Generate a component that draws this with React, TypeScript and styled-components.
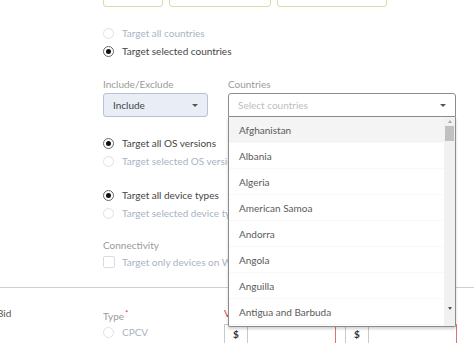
import React from "react";
import styled, { createGlobalStyle } from "styled-components";

const Global = createGlobalStyle`
  html, body { margin: 0; padding: 0; background: #fff; }
  body { font-family: Lato, "Open Sans", Arial, sans-serif; font-size: 10px; color: #454545; overflow: hidden; }
  * { box-sizing: border-box; }
`;

const Page = styled.div`
  width: 474px;
  height: 343px;
  overflow: hidden;
  position: relative;
`;

const Content = styled.div`
  padding-left: 103px;
  display: flex;
  flex-direction: column;
`;

const BoxRow = styled.div`
  display: flex;
  gap: 6px;
  margin-top: -26px;
  height: 33px;
`;

const GreenBox = styled.div<{ w: number }>`
  width: ${(p) => p.w}px;
  height: 33px;
  border: 1px solid #cfe0a8;
  border-radius: 3px;
`;

const RadioGroup = styled.div<{ mt: number }>`
  display: flex;
  flex-direction: column;
  margin-top: ${(p) => p.mt}px;
`;

const RadioRow = styled.div<{ muted?: boolean }>`
  display: flex;
  align-items: center;
  height: 18px;
  gap: 8px;
  color: ${(p) => (p.muted ? "#a9b3c4" : "#454545")};
  white-space: nowrap;
`;

const Radio = styled.span<{ on?: boolean }>`
  width: 11px;
  height: 11px;
  border-radius: 50%;
  border: 1px solid ${(p) => (p.on ? "#666" : "#dde1e6")};
  display: inline-flex;
  align-items: center;
  justify-content: center;
  flex: none;
  &::after {
    content: "";
    width: 5px;
    height: 5px;
    border-radius: 50%;
    background: ${(p) => (p.on ? "#111" : "transparent")};
  }
`;

const SelectRow = styled.div`
  display: flex;
  gap: 20px;
  margin-top: 16px;
`;

const Field = styled.div<{ w: number }>`
  width: ${(p) => p.w}px;
  display: flex;
  flex-direction: column;
  gap: 1px;
  position: relative;
`;

const Label = styled.div`
  color: #9a9a9a;
  height: 16px;
  line-height: 16px;
`;

const SelectBox = styled.div<{ filled?: boolean; focus?: boolean }>`
  height: 24px;
  border: 1px solid ${(p) => (p.focus ? "#8c8c8c" : "#b9c2d2")};
  border-radius: 3px;
  background: ${(p) => (p.filled ? "#e8edf6" : "#fff")};
  display: flex;
  align-items: center;
  justify-content: space-between;
  padding: 0 9px 0 9px;
  color: ${(p) => (p.filled ? "#454545" : "#bdbdbd")};
  ${(p) => (p.focus ? "border-bottom-left-radius:0;border-bottom-right-radius:0;" : "")}
`;

const Caret = styled.span`
  width: 0;
  height: 0;
  border-left: 3px solid transparent;
  border-right: 3px solid transparent;
  border-top: 3px solid #555;
`;

const Dropdown = styled.div`
  position: absolute;
  left: 0;
  top: 41px;
  width: 228px;
  height: 210px;
  border: 1px solid #8c8c8c;
  border-top: none;
  background: #fff;
  box-shadow: 0 2px 3px rgba(0, 0, 0, 0.18);
  display: flex;
  z-index: 5;
  border-bottom-left-radius: 2px;
  border-bottom-right-radius: 2px;
`;

const List = styled.div`
  flex: 1;
  display: flex;
  flex-direction: column;
`;

const Item = styled.div<{ active?: boolean }>`
  height: 26px;
  line-height: 26px;
  padding-left: 10px;
  color: #5a5a5a;
  background: ${(p) => (p.active ? "#f4f4f4" : "#fff")};
  box-shadow: inset 0 -1px 0 #f8f8f8;
`;

const ScrollTrack = styled.div`
  width: 11px;
  background: #f1f1f1;
  display: flex;
  flex-direction: column;
  align-items: center;
  padding-top: 3px;
  position: relative;
`;

const Arrow = styled.span<{ down?: boolean }>`
  width: 0;
  height: 0;
  border-left: 2.5px solid transparent;
  border-right: 2.5px solid transparent;
  ${(p) => (p.down ? "border-top: 3px solid #555;" : "border-bottom: 3px solid #aaa;")}
`;

const Thumb = styled.div`
  width: 9px;
  height: 15px;
  background: #c1c1c1;
  margin-top: 3px;
`;

const DownArrowWrap = styled.div`
  margin-top: auto;
  margin-bottom: 4px;
`;

const CheckRow = styled.div`
  display: flex;
  align-items: center;
  gap: 7px;
  height: 18px;
  color: #a9b3c4;
  white-space: nowrap;
`;

const Checkbox = styled.span`
  width: 12px;
  height: 12px;
  border: 1px solid #d9dde3;
  border-radius: 2px;
  flex: none;
`;

const Section = styled.div<{ mt: number }>`
  margin-top: ${(p) => p.mt}px;
  display: flex;
  flex-direction: column;
`;

const Divider = styled.div`
  height: 1px;
  background: #cfcfcf;
  margin-top: 16px;
`;

const BidRow = styled.div`
  display: grid;
  grid-template-columns: 106px 121px 121px 1fr;
  margin-left: -3px;
  padding-top: 17px;
`;

const BidLabel = styled.div`
  color: #555;
  height: 16px;
  line-height: 16px;
`;

const TypeCol = styled.div`
  display: flex;
  flex-direction: column;
  gap: 2px;
`;

const Req = styled.sup`
  color: #e04040;
  font-size: 8px;
  margin-left: 1px;
`;

const RedLabel = styled.div`
  color: #d33b3b;
  height: 16px;
  line-height: 16px;
`;

const InputCol = styled.div`
  display: flex;
  flex-direction: column;
  gap: 3px;
`;

const MoneyInput = styled.div`
  display: flex;
  height: 26px;
  width: 112px;
`;

const Addon = styled.div`
  width: 23px;
  border: 1px solid #c9c9c9;
  border-right: none;
  background: #fff;
  display: flex;
  justify-content: center;
  padding-top: 3px;
  font-weight: 700;
  font-size: 10px;
  color: #333;
`;

const InputBox = styled.div`
  flex: 1;
  border: 1px solid #c9c9c9;
  border-right-color: #e47070;
`;

const countries = [
  "Afghanistan",
  "Albania",
  "Algeria",
  "American Samoa",
  "Andorra",
  "Angola",
  "Anguilla",
  "Antigua and Barbuda",
];

export default function App() {
  return (
    <Page>
      <Global />
      <Content>
        <BoxRow>
          <GreenBox w={60} />
          <GreenBox w={102} />
          <GreenBox w={110} />
        </BoxRow>

        <RadioGroup mt={17}>
          <RadioRow muted>
            <Radio />
            Target all countries
          </RadioRow>
          <RadioRow>
            <Radio on />
            Target selected countries
          </RadioRow>
        </RadioGroup>

        <SelectRow>
          <Field w={105}>
            <Label>Include/Exclude</Label>
            <SelectBox filled>
              Include
              <Caret />
            </SelectBox>
          </Field>
          <Field w={228}>
            <Label>Countries</Label>
            <SelectBox focus>
              Select countries
              <Caret />
            </SelectBox>
            <Dropdown>
              <List>
                {countries.map((c, i) => (
                  <Item key={c} active={i === 0}>
                    {c}
                  </Item>
                ))}
              </List>
              <ScrollTrack>
                <Arrow />
                <Thumb />
                <DownArrowWrap>
                  <Arrow down />
                </DownArrowWrap>
              </ScrollTrack>
            </Dropdown>
          </Field>
        </SelectRow>

        <RadioGroup mt={17}>
          <RadioRow>
            <Radio on />
            Target all OS versions
          </RadioRow>
          <RadioRow muted>
            <Radio />
            Target selected OS versions
          </RadioRow>
        </RadioGroup>

        <RadioGroup mt={16}>
          <RadioRow>
            <Radio on />
            Target all device types
          </RadioRow>
          <RadioRow muted>
            <Radio />
            Target selected device types
          </RadioRow>
        </RadioGroup>

        <Section mt={15}>
          <Label>Connectivity</Label>
          <CheckRow>
            <Checkbox />
            Target only devices on Wi-Fi
          </CheckRow>
        </Section>
      </Content>

      <Divider />

      <BidRow>
        <BidLabel>Bid</BidLabel>
        <TypeCol>
          <Label>
            Type<Req>*</Req>
          </Label>
          <RadioRow muted>
            <Radio />
            CPCV
          </RadioRow>
        </TypeCol>
        <InputCol>
          <RedLabel>Value</RedLabel>
          <MoneyInput>
            <Addon>$</Addon>
            <InputBox />
          </MoneyInput>
        </InputCol>
        <InputCol>
          <RedLabel>Max</RedLabel>
          <MoneyInput>
            <Addon>$</Addon>
            <InputBox />
          </MoneyInput>
        </InputCol>
      </BidRow>
    </Page>
  );
}
